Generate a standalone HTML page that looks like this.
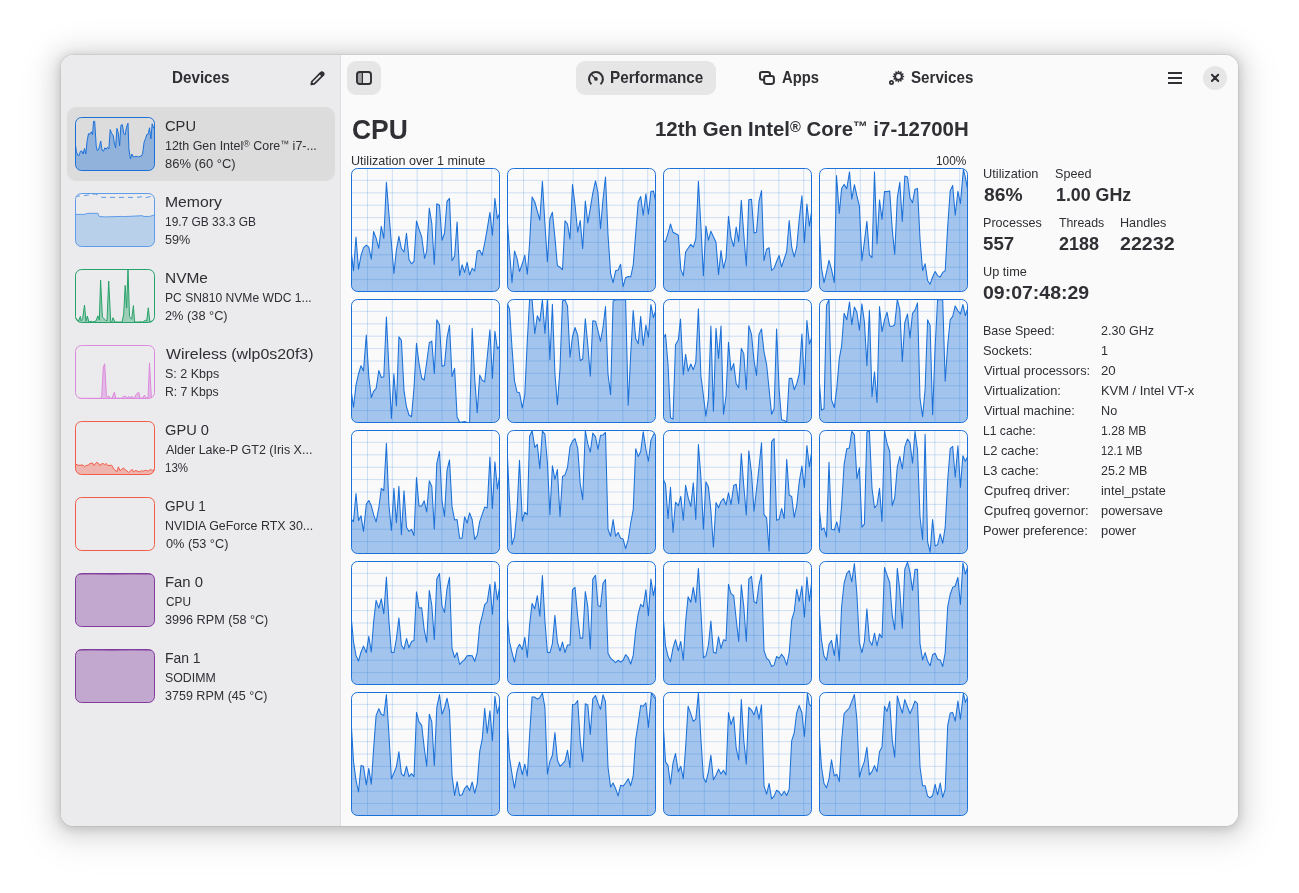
<!DOCTYPE html><html lang="en"><head><meta charset="utf-8"><title>Mission Center</title>
<style>
*{box-sizing:border-box;margin:0;padding:0}
html,body{width:1299px;height:893px;overflow:hidden;background:#fff}
body{font-family:"Liberation Sans",sans-serif;color:#2f2f34;position:relative}
.win{will-change:transform;position:absolute;left:61px;top:55px;width:1177px;height:771px;border-radius:13px;background:#fafafb;overflow:hidden}
.shadow{position:absolute;left:61px;top:55px;width:1177px;height:771px;border-radius:13px;
 box-shadow:0 0 0 1px rgba(0,0,0,.05),0 2px 8px 2px rgba(0,0,0,.13),0 3px 20px 10px rgba(0,0,0,.09),0 6px 36px 18px rgba(0,0,0,.045)}
.side{position:absolute;left:0;top:0;width:279px;height:771px;background:#ebebed}
.sep{position:absolute;left:279px;top:0;width:1px;height:771px;background:#dededf}
.abs{position:absolute;white-space:nowrap}
.t{position:absolute;white-space:nowrap;line-height:1;transform-origin:0 0}
.b{font-weight:700}
.row{position:absolute;left:6px;width:268px;height:74px;border-radius:9px}
.row.sel{background:#dcdcdd}
.thumb{position:absolute;left:8px;width:80px;height:54px}
.rt{position:absolute;left:98px;white-space:nowrap;line-height:1}
.r1{font-size:15px;letter-spacing:.35px}
.r2{font-size:12px;letter-spacing:.2px}
.btn{position:absolute;border-radius:9px;background:#e6e6e7}
.tab{position:absolute;top:6px;height:34px;border-radius:9px}
.tab.on{background:#e6e6e7}
.tab span{position:absolute;top:9px;font-size:15px;font-weight:700;line-height:1;letter-spacing:.1px;white-space:nowrap}
.sup{font-size:.72em;position:relative;top:-.28em}
.big{font-size:17px;font-weight:700;letter-spacing:.3px}
svg{position:absolute;overflow:visible}
</style></head><body>
<div class="shadow"></div><div class="win">
<div class="side"></div><div class="sep"></div>
<div class="t" style="left:110.50px;top:15.01px;font-size:15.9px;transform:scaleX(0.9567);font-weight:700">Devices</div>
<svg style="left:249.4px;top:15.2px" width="16" height="16" viewBox="0 0 16 16"><path d="M1.3 14.5 L1.9 11.5 L10.7 2.7 a1.75 1.75 0 0 1 2.45 0 a1.75 1.75 0 0 1 0 2.45 L4.3 13.9 Z" fill="none" stroke="#2f2f34" stroke-width="1.7" stroke-linejoin="round"/><path d="M9.5 3.9 L10.7 2.7 a1.75 1.75 0 0 1 2.45 2.45 L11.95 6.35 Z" fill="#2f2f34" stroke="#2f2f34" stroke-width="1" stroke-linejoin="round"/><path d="M1.2 14.6 L1.8 11.9 L3.9 14 Z" fill="#2f2f34"/></svg>
<div class="row sel" style="top:52px">
<svg class="thumb" style="top:10px" width="80" height="54" viewBox="0 0 80 54"><defs><clipPath id="tcpu"><rect x="0.5" y="0.5" width="79" height="53" rx="6" ry="6"/></clipPath></defs><g clip-path="url(#tcpu)"><polygon points="0.0,54 0.0,24.6 1.4,34.5 2.7,38.2 4.1,38.5 5.4,34.2 6.8,33.9 8.1,37.0 9.5,31.4 10.8,37.0 12.2,23.4 13.5,16.6 14.9,17.2 16.3,14.8 17.6,17.6 18.5,4.3 19.7,4.3 21.2,28.9 22.2,33.6 23.5,32.9 24.6,28.9 25.7,24.0 27.1,33.3 28.5,34.2 29.8,30.8 31.2,32.3 32.5,30.2 33.9,31.7 35.2,12.6 36.6,16.3 38.2,18.5 39.3,25.9 40.6,30.8 41.9,11.4 43.2,15.4 44.6,28.9 45.9,8.3 47.4,7.7 48.8,16.9 50.1,17.9 51.5,10.2 53.0,6.2 53.9,32.0 55.4,41.9 56.9,37.0 58.3,40.0 59.6,39.7 61.0,39.4 62.3,39.4 63.7,40.0 65.0,39.4 66.4,39.1 67.7,36.3 69.1,25.3 70.5,21.6 71.8,17.6 73.2,17.2 74.5,10.8 75.9,21.9 77.2,6.8 78.6,11.1 80.0,12.3 80.0,54" fill="rgba(28,113,216,.395)"/><polyline points="0.0,24.6 1.4,34.5 2.7,38.2 4.1,38.5 5.4,34.2 6.8,33.9 8.1,37.0 9.5,31.4 10.8,37.0 12.2,23.4 13.5,16.6 14.9,17.2 16.3,14.8 17.6,17.6 18.5,4.3 19.7,4.3 21.2,28.9 22.2,33.6 23.5,32.9 24.6,28.9 25.7,24.0 27.1,33.3 28.5,34.2 29.8,30.8 31.2,32.3 32.5,30.2 33.9,31.7 35.2,12.6 36.6,16.3 38.2,18.5 39.3,25.9 40.6,30.8 41.9,11.4 43.2,15.4 44.6,28.9 45.9,8.3 47.4,7.7 48.8,16.9 50.1,17.9 51.5,10.2 53.0,6.2 53.9,32.0 55.4,41.9 56.9,37.0 58.3,40.0 59.6,39.7 61.0,39.4 62.3,39.4 63.7,40.0 65.0,39.4 66.4,39.1 67.7,36.3 69.1,25.3 70.5,21.6 71.8,17.6 73.2,17.2 74.5,10.8 75.9,21.9 77.2,6.8 78.6,11.1 80.0,12.3" fill="none" stroke="#1c71d8" stroke-width="1.0" stroke-linejoin="round"/></g><rect x="0.5" y="0.5" width="79" height="53" rx="6" ry="6" fill="none" stroke="#1c71d8" stroke-width="1"/></svg>
</div>
<div class="t" style="left:103.93px;top:62.70px;font-size:15.4px;transform:scaleX(0.9545)">CPU</div>
<div class="t" style="left:103.79px;top:85.01px;font-size:12.6px;transform:scaleX(0.9880)">12th Gen Intel<span class="sup">®</span> Core<span class="sup">™</span> i7-...</div>
<div class="t" style="left:104.25px;top:103.01px;font-size:12.6px;transform:scaleX(1.0273)">86% (60 °C)</div>
<div class="row" style="top:128px">
<svg class="thumb" style="top:10px" width="80" height="54" viewBox="0 0 80 54"><defs><clipPath id="tmem"><rect x="0.5" y="0.5" width="79" height="53" rx="6" ry="6"/></clipPath></defs><g clip-path="url(#tmem)"><polygon points="0.0,54 0.0,21.4 9.2,21.4 12.9,20.4 22.8,20.3 24.3,23.5 30.8,23.9 46.2,23.4 49.3,23.6 67.1,22.7 69.0,23.5 74.5,23.4 80.0,22.0 80.0,54" fill="rgba(98,160,234,.36)"/><polyline points="0.0,21.4 9.2,21.4 12.9,20.4 22.8,20.3 24.3,23.5 30.8,23.9 46.2,23.4 49.3,23.6 67.1,22.7 69.0,23.5 74.5,23.4 80.0,22.0" fill="none" stroke="#5e9be8" stroke-width="1.0" stroke-linejoin="round"/><polyline points="0.0,3.4 9.9,2.5 20.3,0.9 23.4,2.5 27.1,4.4 61.6,4.4 67.1,3.7 70.2,4.8 80.0,2.5" fill="none" stroke="#5e9be8" stroke-width="1" stroke-dasharray="5 4"/></g><rect x="0.5" y="0.5" width="79" height="53" rx="6" ry="6" fill="none" stroke="#5e9be8" stroke-width="1"/></svg>
</div>
<div class="t" style="left:104.07px;top:138.70px;font-size:15.4px;transform:scaleX(1.0227)">Memory</div>
<div class="t" style="left:103.79px;top:161.01px;font-size:12.6px;transform:scaleX(0.9478)">19.7 GB 33.3 GB</div>
<div class="t" style="left:104.01px;top:179.01px;font-size:12.6px;transform:scaleX(1.0018)">59%</div>
<div class="row" style="top:204px">
<svg class="thumb" style="top:10px" width="80" height="54" viewBox="0 0 80 54"><defs><clipPath id="tnvme"><rect x="0.5" y="0.5" width="79" height="53" rx="6" ry="6"/></clipPath></defs><g clip-path="url(#tnvme)"><polygon points="0.0,54 0.0,48.0 1.4,49.9 3.4,52.0 5.4,47.4 6.2,52.0 7.7,49.3 9.5,36.0 11.0,52.3 12.3,47.1 13.9,53.0 16.3,52.3 17.9,53.0 20.9,52.0 22.9,46.8 24.3,51.1 25.6,11.1 27.4,48.0 30.8,51.4 32.0,51.7 33.7,12.0 35.7,52.7 36.8,53.0 37.9,48.7 40.0,53.0 47.1,53.0 48.7,45.0 50.2,16.5 51.6,39.1 53.0,0.6 54.5,47.4 56.7,50.2 58.4,36.6 59.6,53.0 64.0,53.0 65.3,52.7 67.7,53.1 70.5,51.1 71.7,52.3 73.3,38.8 74.8,52.8 77.0,52.0 80.0,49.3 80.0,54" fill="rgba(38,162,105,.40)"/><polyline points="0.0,48.0 1.4,49.9 3.4,52.0 5.4,47.4 6.2,52.0 7.7,49.3 9.5,36.0 11.0,52.3 12.3,47.1 13.9,53.0 16.3,52.3 17.9,53.0 20.9,52.0 22.9,46.8 24.3,51.1 25.6,11.1 27.4,48.0 30.8,51.4 32.0,51.7 33.7,12.0 35.7,52.7 36.8,53.0 37.9,48.7 40.0,53.0 47.1,53.0 48.7,45.0 50.2,16.5 51.6,39.1 53.0,0.6 54.5,47.4 56.7,50.2 58.4,36.6 59.6,53.0 64.0,53.0 65.3,52.7 67.7,53.1 70.5,51.1 71.7,52.3 73.3,38.8 74.8,52.8 77.0,52.0 80.0,49.3" fill="none" stroke="#26a269" stroke-width="1.0" stroke-linejoin="round"/></g><rect x="0.5" y="0.5" width="79" height="53" rx="6" ry="6" fill="none" stroke="#26a269" stroke-width="1"/></svg>
</div>
<div class="t" style="left:104.33px;top:214.70px;font-size:15.4px;transform:scaleX(1.0033)">NVMe</div>
<div class="t" style="left:104.40px;top:237.01px;font-size:12.6px;transform:scaleX(0.9612)">PC SN810 NVMe WDC 1...</div>
<div class="t" style="left:104.49px;top:255.01px;font-size:12.6px;transform:scaleX(1.0146)">2% (38 °C)</div>
<div class="row" style="top:280px">
<svg class="thumb" style="top:10px" width="80" height="54" viewBox="0 0 80 54"><defs><clipPath id="tnet"><rect x="0.5" y="0.5" width="79" height="53" rx="6" ry="6"/></clipPath></defs><g clip-path="url(#tnet)"><polygon points="0.0,54 0.0,53.3 25.9,53.3 26.8,50.5 28.3,22.2 29.7,18.8 31.4,50.5 32.3,52.0 33.9,51.1 35.1,53.3 37.0,53.1 39.4,47.1 40.8,53.1 46.8,53.1 48.7,51.2 50.5,51.4 52.3,52.7 54.2,51.4 55.4,53.1 56.7,51.2 58.2,53.1 59.4,53.0 61.0,49.6 63.7,47.1 65.0,53.1 67.7,53.1 69.3,50.2 71.4,52.7 73.0,53.1 74.5,17.9 76.4,53.1 80.0,51.7 80.0,54" fill="rgba(220,138,221,.50)"/><polyline points="0.0,53.3 25.9,53.3 26.8,50.5 28.3,22.2 29.7,18.8 31.4,50.5 32.3,52.0 33.9,51.1 35.1,53.3 37.0,53.1 39.4,47.1 40.8,53.1 46.8,53.1 48.7,51.2 50.5,51.4 52.3,52.7 54.2,51.4 55.4,53.1 56.7,51.2 58.2,53.1 59.4,53.0 61.0,49.6 63.7,47.1 65.0,53.1 67.7,53.1 69.3,50.2 71.4,52.7 73.0,53.1 74.5,17.9 76.4,53.1 80.0,51.7" fill="none" stroke="#dc8add" stroke-width="1.0" stroke-linejoin="round"/></g><rect x="0.5" y="0.5" width="79" height="53" rx="6" ry="6" fill="none" stroke="#dc8add" stroke-width="1"/></svg>
</div>
<div class="t" style="left:105.08px;top:290.70px;font-size:15.4px;transform:scaleX(1.0322)">Wireless (wlp0s20f3)</div>
<div class="t" style="left:103.85px;top:313.01px;font-size:12.6px;transform:scaleX(0.9924)">S: 2 Kbps</div>
<div class="t" style="left:104.40px;top:331.01px;font-size:12.6px;transform:scaleX(0.9690)">R: 7 Kbps</div>
<div class="row" style="top:356px">
<svg class="thumb" style="top:10px" width="80" height="54" viewBox="0 0 80 54"><defs><clipPath id="tgpu0"><rect x="0.5" y="0.5" width="79" height="53" rx="6" ry="6"/></clipPath></defs><g clip-path="url(#tgpu0)"><polygon points="0.0,54 0.0,42.8 3.1,44.3 8.0,44.0 9.5,45.7 11.1,44.5 13.5,44.0 14.8,42.5 17.6,42.0 19.0,44.6 21.6,41.3 23.4,42.2 24.6,44.8 25.9,43.1 28.3,42.5 29.6,43.7 31.4,42.5 32.6,44.5 36.6,44.2 39.4,48.7 41.9,50.6 43.4,45.9 45.0,49.6 48.7,46.9 50.2,49.0 51.7,49.6 53.3,51.4 55.4,50.2 57.0,48.3 58.5,50.8 61.0,49.3 62.2,50.2 64.7,50.8 66.5,49.4 67.7,50.4 69.6,49.4 71.7,49.4 73.3,50.2 75.6,48.3 77.3,49.6 80.0,48.0 80.0,54" fill="rgba(246,97,81,.40)"/><polyline points="0.0,42.8 3.1,44.3 8.0,44.0 9.5,45.7 11.1,44.5 13.5,44.0 14.8,42.5 17.6,42.0 19.0,44.6 21.6,41.3 23.4,42.2 24.6,44.8 25.9,43.1 28.3,42.5 29.6,43.7 31.4,42.5 32.6,44.5 36.6,44.2 39.4,48.7 41.9,50.6 43.4,45.9 45.0,49.6 48.7,46.9 50.2,49.0 51.7,49.6 53.3,51.4 55.4,50.2 57.0,48.3 58.5,50.8 61.0,49.3 62.2,50.2 64.7,50.8 66.5,49.4 67.7,50.4 69.6,49.4 71.7,49.4 73.3,50.2 75.6,48.3 77.3,49.6 80.0,48.0" fill="none" stroke="#f15d49" stroke-width="1.0" stroke-linejoin="round"/></g><rect x="0.5" y="0.5" width="79" height="53" rx="6" ry="6" fill="none" stroke="#f15d49" stroke-width="1"/></svg>
</div>
<div class="t" style="left:103.93px;top:366.70px;font-size:15.4px;transform:scaleX(0.9515)">GPU 0</div>
<div class="t" style="left:105.18px;top:389.01px;font-size:12.6px;transform:scaleX(0.9927)">Alder Lake-P GT2 (Iris X...</div>
<div class="t" style="left:103.79px;top:407.01px;font-size:12.6px;transform:scaleX(0.9155)">13%</div>
<div class="row" style="top:432px">
<svg class="thumb" style="top:10px" width="80" height="54" viewBox="0 0 80 54"><defs><clipPath id="tgpu1"><rect x="0.5" y="0.5" width="79" height="53" rx="6" ry="6"/></clipPath></defs><g clip-path="url(#tgpu1)"></g><rect x="0.5" y="0.5" width="79" height="53" rx="6" ry="6" fill="none" stroke="#f15d49" stroke-width="1"/></svg>
</div>
<div class="t" style="left:103.93px;top:442.70px;font-size:15.4px;transform:scaleX(0.8840)">GPU 1</div>
<div class="t" style="left:104.40px;top:465.01px;font-size:12.6px;transform:scaleX(0.9860)">NVIDIA GeForce RTX 30...</div>
<div class="t" style="left:105.06px;top:483.01px;font-size:12.6px;transform:scaleX(1.0108)">0% (53 °C)</div>
<div class="row" style="top:508px">
<svg class="thumb" style="top:10px" width="80" height="54" viewBox="0 0 80 54"><defs><clipPath id="tfan0"><rect x="0.5" y="0.5" width="79" height="53" rx="6" ry="6"/></clipPath></defs><g clip-path="url(#tfan0)"><polygon points="0.0,54 0.0,1.1 18.5,0.9 37.0,1.2 55.4,0.9 80.0,1.1 80.0,54" fill="rgba(129,61,156,.39)"/><polyline points="0.0,1.1 18.5,0.9 37.0,1.2 55.4,0.9 80.0,1.1" fill="none" stroke="#813d9c" stroke-width="1.0" stroke-linejoin="round"/></g><rect x="0.5" y="0.5" width="79" height="53" rx="6" ry="6" fill="none" stroke="#813d9c" stroke-width="1"/></svg>
</div>
<div class="t" style="left:104.02px;top:518.70px;font-size:15.4px;transform:scaleX(0.9661)">Fan 0</div>
<div class="t" style="left:104.72px;top:541.01px;font-size:12.6px;transform:scaleX(0.9372)">CPU</div>
<div class="t" style="left:104.06px;top:559.01px;font-size:12.6px;transform:scaleX(1.0028)">3996 RPM (58 °C)</div>
<div class="row" style="top:584px">
<svg class="thumb" style="top:10px" width="80" height="54" viewBox="0 0 80 54"><defs><clipPath id="tfan1"><rect x="0.5" y="0.5" width="79" height="53" rx="6" ry="6"/></clipPath></defs><g clip-path="url(#tfan1)"><polygon points="0.0,54 0.0,1.1 18.5,0.9 37.0,1.2 55.4,0.9 80.0,1.1 80.0,54" fill="rgba(129,61,156,.39)"/><polyline points="0.0,1.1 18.5,0.9 37.0,1.2 55.4,0.9 80.0,1.1" fill="none" stroke="#813d9c" stroke-width="1.0" stroke-linejoin="round"/></g><rect x="0.5" y="0.5" width="79" height="53" rx="6" ry="6" fill="none" stroke="#813d9c" stroke-width="1"/></svg>
</div>
<div class="t" style="left:104.40px;top:594.70px;font-size:15.4px;transform:scaleX(0.9049)">Fan 1</div>
<div class="t" style="left:103.85px;top:617.01px;font-size:12.6px;transform:scaleX(0.9794)">SODIMM</div>
<div class="t" style="left:104.06px;top:635.01px;font-size:12.6px;transform:scaleX(0.9944)">3759 RPM (45 °C)</div>
<div class="btn" style="left:286px;top:6px;width:34px;height:34px"></div>
<svg style="left:295px;top:15px" width="16" height="16" viewBox="0 0 16 16"><rect x="1.9" y="2.9" width="4.2" height="10.2" fill="#2f2f34" fill-opacity=".36"/><rect x="1" y="2" width="14" height="12" rx="2.6" fill="none" stroke="#2f2f34" stroke-width="1.9"/><path d="M6.4 2V14" stroke="#2f2f34" stroke-width="1.2"/></svg>
<div class="tab on" style="left:515px;width:140px"><svg style="left:12px;top:10px" width="16" height="16" viewBox="0 0 16 16"><path d="M3.39 13.20A6.95 6.95 0 1 1 12.51 13.20" fill="none" stroke="#2f2f34" stroke-width="2.1"/><circle cx="7.95" cy="7.9" r="1.85" fill="#2f2f34"/><path d="M7.95 7.9L4 4.1" stroke="#2f2f34" stroke-width="1.4" stroke-linecap="round"/></svg></div>
<div class="t" style="left:549.09px;top:15.01px;font-size:15.9px;transform:scaleX(0.9590);font-weight:700">Performance</div>
<div class="tab" style="left:687px;width:82px"><svg style="left:10px;top:9px" width="18" height="16" viewBox="0 0 18 16"><rect x="1.96" y="1.96" width="10" height="7.85" rx="2.3" fill="none" stroke="#2f2f34" stroke-width="2"/><rect x="6.1" y="6.1" width="9.8" height="7.8" rx="2.3" fill="#fafafb" stroke="#2f2f34" stroke-width="2"/></svg></div>
<div class="t" style="left:720.68px;top:15.01px;font-size:15.9px;transform:scaleX(0.9304);font-weight:700">Apps</div>
<div class="tab" style="left:817px;width:106px"><svg style="left:10px;top:9px" width="18" height="16" viewBox="0 0 18 16"><g transform="translate(10.46,6.52)"><circle r="3.35" fill="none" stroke="#2f2f34" stroke-width="1.9"/><path d="M-1.05 -3.9 L-0.55 -5.7 L0.55 -5.7 L1.05 -3.9Z" fill="#2f2f34" transform="rotate(0)"/><path d="M-1.05 -3.9 L-0.55 -5.7 L0.55 -5.7 L1.05 -3.9Z" fill="#2f2f34" transform="rotate(30)"/><path d="M-1.05 -3.9 L-0.55 -5.7 L0.55 -5.7 L1.05 -3.9Z" fill="#2f2f34" transform="rotate(60)"/><path d="M-1.05 -3.9 L-0.55 -5.7 L0.55 -5.7 L1.05 -3.9Z" fill="#2f2f34" transform="rotate(90)"/><path d="M-1.05 -3.9 L-0.55 -5.7 L0.55 -5.7 L1.05 -3.9Z" fill="#2f2f34" transform="rotate(120)"/><path d="M-1.05 -3.9 L-0.55 -5.7 L0.55 -5.7 L1.05 -3.9Z" fill="#2f2f34" transform="rotate(150)"/><path d="M-1.05 -3.9 L-0.55 -5.7 L0.55 -5.7 L1.05 -3.9Z" fill="#2f2f34" transform="rotate(180)"/><path d="M-1.05 -3.9 L-0.55 -5.7 L0.55 -5.7 L1.05 -3.9Z" fill="#2f2f34" transform="rotate(210)"/><path d="M-1.05 -3.9 L-0.55 -5.7 L0.55 -5.7 L1.05 -3.9Z" fill="#2f2f34" transform="rotate(240)"/><path d="M-1.05 -3.9 L-0.55 -5.7 L0.55 -5.7 L1.05 -3.9Z" fill="#2f2f34" transform="rotate(270)"/><path d="M-1.05 -3.9 L-0.55 -5.7 L0.55 -5.7 L1.05 -3.9Z" fill="#2f2f34" transform="rotate(300)"/><path d="M-1.05 -3.9 L-0.55 -5.7 L0.55 -5.7 L1.05 -3.9Z" fill="#2f2f34" transform="rotate(330)"/></g><circle cx="3.47" cy="12.43" r="1.65" fill="none" stroke="#2f2f34" stroke-width="1.7"/></svg></div>
<div class="t" style="left:850.35px;top:15.01px;font-size:15.9px;transform:scaleX(0.9530);font-weight:700">Services</div>
<svg style="left:1106px;top:15px" width="16" height="16" viewBox="0 0 16 16"><path d="M1 3H15M1 8H15M1 13H15" stroke="#2f2f34" stroke-width="2"/></svg>
<div class="btn" style="left:1142px;top:11px;width:24px;height:24px;border-radius:12px"></div>
<svg style="left:1146px;top:15px" width="16" height="16" viewBox="0 0 16 16"><path d="M4.9 4.75L11.2 11.05M11.2 4.75L4.9 11.05" stroke="#2f2f34" stroke-width="2" stroke-linecap="round"/></svg>
<div class="t" style="left:290.99px;top:60.81px;font-size:28px;transform:scaleX(0.9444);font-weight:700">CPU</div>
<div class="t" style="left:593.60px;top:62.91px;font-size:21px;transform:scaleX(0.9721);font-weight:700">12th Gen Intel<span class="sup">®</span> Core<span class="sup">™</span> i7-12700H</div>
<div class="t" style="left:290.40px;top:99.72px;font-size:12.6px;transform:scaleX(0.9987)">Utilization over 1 minute</div>
<div class="t" style="left:875.40px;top:99.72px;font-size:12.6px;transform:scaleX(0.9437)">100%</div>
<svg style="left:290px;top:113px" width="149" height="124" viewBox="0 0 149 124"><defs><clipPath id="c0"><rect x="0.5" y="0.5" width="148" height="123" rx="6" ry="6"/></clipPath></defs><g clip-path="url(#c0)"><path d="M16.50 0V124M41.33 0V124M66.17 0V124M91.00 0V124M115.83 0V124M140.67 0V124M0 12.40H149M0 24.80H149M0 37.20H149M0 49.60H149M0 62.00H149M0 74.40H149M0 86.80H149M0 99.20H149M0 111.60H149" stroke="#1c71d8" stroke-opacity=".2" stroke-width="1" fill="none"/><polygon points="0.0,124 0.0,81.9 2.5,102.8 5.0,69.0 7.5,101.1 10.0,87.5 12.5,79.8 15.3,77.2 17.8,79.2 20.3,91.2 22.6,63.5 25.1,70.1 27.8,80.3 30.3,58.3 32.8,70.5 35.4,14.2 37.9,45.8 40.4,75.0 42.9,105.5 45.4,81.9 47.9,68.3 50.4,80.5 53.0,84.0 55.5,65.3 58.0,91.6 60.5,95.8 63.0,93.3 65.5,53.0 68.0,61.1 70.7,69.0 73.6,90.3 75.7,83.3 78.3,40.0 80.8,55.5 83.3,96.5 85.8,35.7 88.5,37.2 91.0,72.2 93.5,65.3 96.0,33.3 98.5,30.3 101.0,92.8 103.6,88.2 106.1,53.9 108.6,107.6 111.1,96.8 113.6,104.4 116.1,94.4 118.6,106.9 121.2,100.3 123.7,103.0 126.2,83.3 128.7,82.2 131.2,87.2 133.7,75.0 136.2,61.1 138.9,44.4 141.4,67.3 143.9,30.3 146.4,50.7 149.0,44.4 149.0,124" fill="rgba(28,113,216,.395)"/><polyline points="0.0,81.9 2.5,102.8 5.0,69.0 7.5,101.1 10.0,87.5 12.5,79.8 15.3,77.2 17.8,79.2 20.3,91.2 22.6,63.5 25.1,70.1 27.8,80.3 30.3,58.3 32.8,70.5 35.4,14.2 37.9,45.8 40.4,75.0 42.9,105.5 45.4,81.9 47.9,68.3 50.4,80.5 53.0,84.0 55.5,65.3 58.0,91.6 60.5,95.8 63.0,93.3 65.5,53.0 68.0,61.1 70.7,69.0 73.6,90.3 75.7,83.3 78.3,40.0 80.8,55.5 83.3,96.5 85.8,35.7 88.5,37.2 91.0,72.2 93.5,65.3 96.0,33.3 98.5,30.3 101.0,92.8 103.6,88.2 106.1,53.9 108.6,107.6 111.1,96.8 113.6,104.4 116.1,94.4 118.6,106.9 121.2,100.3 123.7,103.0 126.2,83.3 128.7,82.2 131.2,87.2 133.7,75.0 136.2,61.1 138.9,44.4 141.4,67.3 143.9,30.3 146.4,50.7 149.0,44.4" fill="none" stroke="#1c71d8" stroke-width="1.05" stroke-linejoin="round"/></g><rect x="0.5" y="0.5" width="148" height="123" rx="6" ry="6" fill="none" stroke="#1c71d8" stroke-width="1"/></svg>
<svg style="left:446px;top:113px" width="149" height="124" viewBox="0 0 149 124"><defs><clipPath id="c1"><rect x="0.5" y="0.5" width="148" height="123" rx="6" ry="6"/></clipPath></defs><g clip-path="url(#c1)"><path d="M16.50 0V124M41.33 0V124M66.17 0V124M91.00 0V124M115.83 0V124M140.67 0V124M0 12.40H149M0 24.80H149M0 37.20H149M0 49.60H149M0 62.00H149M0 74.40H149M0 86.80H149M0 99.20H149M0 111.60H149" stroke="#1c71d8" stroke-opacity=".2" stroke-width="1" fill="none"/><polygon points="0.0,124 0.0,47.2 2.5,83.3 5.0,114.6 7.5,83.0 10.0,90.3 12.5,103.5 15.3,95.8 17.8,87.2 20.3,106.2 22.6,75.0 25.1,28.9 27.8,34.0 30.3,43.0 32.8,52.1 35.4,13.2 37.9,55.5 40.4,93.7 42.9,50.7 45.4,44.2 47.9,69.4 50.4,97.6 53.0,99.3 55.5,101.6 58.0,52.8 60.5,56.0 63.0,71.1 65.5,16.4 68.0,36.8 70.7,64.2 73.2,52.5 75.7,80.8 78.3,33.0 80.8,54.9 83.3,40.3 85.8,25.0 88.5,12.9 91.0,25.0 93.5,60.7 96.0,31.2 98.5,9.0 101.0,66.7 103.6,105.5 106.1,114.6 108.6,102.8 111.1,102.1 113.6,96.2 116.1,118.7 118.6,109.7 121.2,108.6 123.7,109.0 126.2,97.2 128.7,65.3 131.2,34.0 133.7,28.5 136.2,47.2 138.9,25.7 141.4,46.2 143.9,23.6 146.4,22.9 149.0,34.7 149.0,124" fill="rgba(28,113,216,.395)"/><polyline points="0.0,47.2 2.5,83.3 5.0,114.6 7.5,83.0 10.0,90.3 12.5,103.5 15.3,95.8 17.8,87.2 20.3,106.2 22.6,75.0 25.1,28.9 27.8,34.0 30.3,43.0 32.8,52.1 35.4,13.2 37.9,55.5 40.4,93.7 42.9,50.7 45.4,44.2 47.9,69.4 50.4,97.6 53.0,99.3 55.5,101.6 58.0,52.8 60.5,56.0 63.0,71.1 65.5,16.4 68.0,36.8 70.7,64.2 73.2,52.5 75.7,80.8 78.3,33.0 80.8,54.9 83.3,40.3 85.8,25.0 88.5,12.9 91.0,25.0 93.5,60.7 96.0,31.2 98.5,9.0 101.0,66.7 103.6,105.5 106.1,114.6 108.6,102.8 111.1,102.1 113.6,96.2 116.1,118.7 118.6,109.7 121.2,108.6 123.7,109.0 126.2,97.2 128.7,65.3 131.2,34.0 133.7,28.5 136.2,47.2 138.9,25.7 141.4,46.2 143.9,23.6 146.4,22.9 149.0,34.7" fill="none" stroke="#1c71d8" stroke-width="1.05" stroke-linejoin="round"/></g><rect x="0.5" y="0.5" width="148" height="123" rx="6" ry="6" fill="none" stroke="#1c71d8" stroke-width="1"/></svg>
<svg style="left:602px;top:113px" width="149" height="124" viewBox="0 0 149 124"><defs><clipPath id="c2"><rect x="0.5" y="0.5" width="148" height="123" rx="6" ry="6"/></clipPath></defs><g clip-path="url(#c2)"><path d="M16.50 0V124M41.33 0V124M66.17 0V124M91.00 0V124M115.83 0V124M140.67 0V124M0 12.40H149M0 24.80H149M0 37.20H149M0 49.60H149M0 62.00H149M0 74.40H149M0 86.80H149M0 99.20H149M0 111.60H149" stroke="#1c71d8" stroke-opacity=".2" stroke-width="1" fill="none"/><polygon points="0.0,124 0.0,72.9 2.5,73.6 5.0,65.3 7.5,56.0 10.0,64.2 12.5,65.5 15.3,67.3 17.8,101.4 20.3,107.9 22.6,84.0 25.1,80.3 27.8,76.4 30.3,79.2 32.8,70.8 35.4,13.2 37.9,58.3 40.4,107.6 42.9,58.0 45.4,72.2 47.9,63.2 50.4,68.7 53.0,74.3 55.5,106.6 58.0,82.6 60.5,100.3 63.0,90.3 65.5,48.3 68.0,69.4 70.7,78.5 73.2,59.0 75.7,73.6 78.3,32.2 80.8,66.7 83.3,97.9 85.8,31.7 88.5,31.2 91.0,65.0 93.5,64.2 96.0,33.3 98.5,22.5 101.0,92.6 103.6,81.2 106.1,79.8 108.6,102.5 111.1,100.0 113.6,93.5 116.1,87.5 118.6,98.9 121.2,91.0 123.7,83.3 126.2,52.5 128.7,79.2 131.2,88.9 133.7,79.2 136.2,51.4 138.9,27.8 141.4,74.6 143.9,36.1 146.4,58.3 149.0,40.3 149.0,124" fill="rgba(28,113,216,.395)"/><polyline points="0.0,72.9 2.5,73.6 5.0,65.3 7.5,56.0 10.0,64.2 12.5,65.5 15.3,67.3 17.8,101.4 20.3,107.9 22.6,84.0 25.1,80.3 27.8,76.4 30.3,79.2 32.8,70.8 35.4,13.2 37.9,58.3 40.4,107.6 42.9,58.0 45.4,72.2 47.9,63.2 50.4,68.7 53.0,74.3 55.5,106.6 58.0,82.6 60.5,100.3 63.0,90.3 65.5,48.3 68.0,69.4 70.7,78.5 73.2,59.0 75.7,73.6 78.3,32.2 80.8,66.7 83.3,97.9 85.8,31.7 88.5,31.2 91.0,65.0 93.5,64.2 96.0,33.3 98.5,22.5 101.0,92.6 103.6,81.2 106.1,79.8 108.6,102.5 111.1,100.0 113.6,93.5 116.1,87.5 118.6,98.9 121.2,91.0 123.7,83.3 126.2,52.5 128.7,79.2 131.2,88.9 133.7,79.2 136.2,51.4 138.9,27.8 141.4,74.6 143.9,36.1 146.4,58.3 149.0,40.3" fill="none" stroke="#1c71d8" stroke-width="1.05" stroke-linejoin="round"/></g><rect x="0.5" y="0.5" width="148" height="123" rx="6" ry="6" fill="none" stroke="#1c71d8" stroke-width="1"/></svg>
<svg style="left:758px;top:113px" width="149" height="124" viewBox="0 0 149 124"><defs><clipPath id="c3"><rect x="0.5" y="0.5" width="148" height="123" rx="6" ry="6"/></clipPath></defs><g clip-path="url(#c3)"><path d="M16.50 0V124M41.33 0V124M66.17 0V124M91.00 0V124M115.83 0V124M140.67 0V124M0 12.40H149M0 24.80H149M0 37.20H149M0 49.60H149M0 62.00H149M0 74.40H149M0 86.80H149M0 99.20H149M0 111.60H149" stroke="#1c71d8" stroke-opacity=".2" stroke-width="1" fill="none"/><polygon points="0.0,124 0.0,55.5 2.5,100.0 5.0,114.6 7.5,104.1 10.0,92.3 12.5,101.4 15.3,114.6 17.5,7.6 20.3,45.5 22.6,20.6 25.1,16.4 27.8,20.6 30.5,3.9 32.8,31.2 35.4,16.7 37.9,27.8 40.4,38.2 42.9,92.8 45.4,73.6 47.9,53.2 50.4,86.8 53.0,89.6 55.5,3.9 58.0,75.7 60.5,31.9 63.0,51.4 65.5,23.6 68.0,23.6 70.7,22.9 73.2,61.1 75.7,86.4 78.3,29.9 80.8,14.3 83.3,53.5 85.8,8.1 88.5,9.0 91.0,29.9 93.5,34.7 96.0,21.2 98.5,20.6 101.0,70.8 103.6,102.5 106.1,95.8 108.6,112.5 111.1,116.2 113.6,109.0 116.1,103.5 118.6,107.6 121.2,109.0 123.7,104.4 126.2,102.8 128.7,58.3 131.2,22.9 133.7,17.4 136.2,47.2 138.9,23.3 141.4,35.4 144.4,1.4 146.4,9.7 149.0,23.6 149.0,124" fill="rgba(28,113,216,.395)"/><polyline points="0.0,55.5 2.5,100.0 5.0,114.6 7.5,104.1 10.0,92.3 12.5,101.4 15.3,114.6 17.5,7.6 20.3,45.5 22.6,20.6 25.1,16.4 27.8,20.6 30.5,3.9 32.8,31.2 35.4,16.7 37.9,27.8 40.4,38.2 42.9,92.8 45.4,73.6 47.9,53.2 50.4,86.8 53.0,89.6 55.5,3.9 58.0,75.7 60.5,31.9 63.0,51.4 65.5,23.6 68.0,23.6 70.7,22.9 73.2,61.1 75.7,86.4 78.3,29.9 80.8,14.3 83.3,53.5 85.8,8.1 88.5,9.0 91.0,29.9 93.5,34.7 96.0,21.2 98.5,20.6 101.0,70.8 103.6,102.5 106.1,95.8 108.6,112.5 111.1,116.2 113.6,109.0 116.1,103.5 118.6,107.6 121.2,109.0 123.7,104.4 126.2,102.8 128.7,58.3 131.2,22.9 133.7,17.4 136.2,47.2 138.9,23.3 141.4,35.4 144.4,1.4 146.4,9.7 149.0,23.6" fill="none" stroke="#1c71d8" stroke-width="1.05" stroke-linejoin="round"/></g><rect x="0.5" y="0.5" width="148" height="123" rx="6" ry="6" fill="none" stroke="#1c71d8" stroke-width="1"/></svg>
<svg style="left:290px;top:244px" width="149" height="124" viewBox="0 0 149 124"><defs><clipPath id="c4"><rect x="0.5" y="0.5" width="148" height="123" rx="6" ry="6"/></clipPath></defs><g clip-path="url(#c4)"><path d="M16.50 0V124M41.33 0V124M66.17 0V124M91.00 0V124M115.83 0V124M140.67 0V124M0 12.40H149M0 24.80H149M0 37.20H149M0 49.60H149M0 62.00H149M0 74.40H149M0 86.80H149M0 99.20H149M0 111.60H149" stroke="#1c71d8" stroke-opacity=".2" stroke-width="1" fill="none"/><polygon points="0.0,124 0.0,90.3 2.5,108.3 5.0,86.1 7.5,75.0 10.0,66.7 12.5,71.9 15.3,36.1 17.8,77.8 20.3,98.6 22.6,92.3 25.1,89.6 27.8,71.5 30.3,78.5 32.8,77.8 35.4,18.1 37.9,69.4 40.4,119.4 42.9,74.7 45.4,106.9 47.9,37.8 50.4,41.4 53.0,91.6 55.5,108.0 58.0,116.0 60.5,117.8 63.0,88.9 65.5,44.2 68.0,64.6 70.7,79.2 73.2,81.0 75.7,63.2 78.3,43.7 80.8,42.1 83.3,74.6 85.8,20.8 88.5,25.7 91.0,67.3 93.5,66.4 96.0,38.9 98.5,26.4 101.0,77.5 103.6,69.4 106.1,118.0 108.6,123.3 111.1,122.9 113.6,122.5 116.1,123.6 118.6,123.3 121.2,29.2 123.7,79.2 126.2,113.9 128.7,76.1 131.2,81.2 133.7,82.9 136.2,58.3 138.9,30.8 141.4,79.4 143.9,32.2 146.4,50.0 149.0,46.5 149.0,124" fill="rgba(28,113,216,.395)"/><polyline points="0.0,90.3 2.5,108.3 5.0,86.1 7.5,75.0 10.0,66.7 12.5,71.9 15.3,36.1 17.8,77.8 20.3,98.6 22.6,92.3 25.1,89.6 27.8,71.5 30.3,78.5 32.8,77.8 35.4,18.1 37.9,69.4 40.4,119.4 42.9,74.7 45.4,106.9 47.9,37.8 50.4,41.4 53.0,91.6 55.5,108.0 58.0,116.0 60.5,117.8 63.0,88.9 65.5,44.2 68.0,64.6 70.7,79.2 73.2,81.0 75.7,63.2 78.3,43.7 80.8,42.1 83.3,74.6 85.8,20.8 88.5,25.7 91.0,67.3 93.5,66.4 96.0,38.9 98.5,26.4 101.0,77.5 103.6,69.4 106.1,118.0 108.6,123.3 111.1,122.9 113.6,122.5 116.1,123.6 118.6,123.3 121.2,29.2 123.7,79.2 126.2,113.9 128.7,76.1 131.2,81.2 133.7,82.9 136.2,58.3 138.9,30.8 141.4,79.4 143.9,32.2 146.4,50.0 149.0,46.5" fill="none" stroke="#1c71d8" stroke-width="1.05" stroke-linejoin="round"/></g><rect x="0.5" y="0.5" width="148" height="123" rx="6" ry="6" fill="none" stroke="#1c71d8" stroke-width="1"/></svg>
<svg style="left:446px;top:244px" width="149" height="124" viewBox="0 0 149 124"><defs><clipPath id="c5"><rect x="0.5" y="0.5" width="148" height="123" rx="6" ry="6"/></clipPath></defs><g clip-path="url(#c5)"><path d="M16.50 0V124M41.33 0V124M66.17 0V124M91.00 0V124M115.83 0V124M140.67 0V124M0 12.40H149M0 24.80H149M0 37.20H149M0 49.60H149M0 62.00H149M0 74.40H149M0 86.80H149M0 99.20H149M0 111.60H149" stroke="#1c71d8" stroke-opacity=".2" stroke-width="1" fill="none"/><polygon points="0.0,124 0.0,4.2 2.5,9.7 5.0,48.6 7.5,81.9 10.0,93.0 12.5,93.7 15.3,109.0 17.8,95.8 20.3,41.7 22.6,0.7 25.1,0.7 27.8,34.7 30.3,16.7 32.8,22.2 35.4,0.7 37.9,34.4 40.4,0.7 42.9,60.8 45.4,5.3 47.9,74.3 50.4,105.8 53.0,69.4 55.5,2.1 58.0,1.1 60.5,6.9 63.0,58.3 65.5,37.5 68.0,28.5 70.7,36.1 73.2,61.8 75.7,60.0 78.3,19.7 80.8,45.8 83.3,77.3 85.8,21.8 88.5,22.2 91.0,31.9 93.5,42.4 96.0,28.5 98.5,7.6 101.0,75.0 103.6,95.8 106.1,2.1 108.6,0.7 111.1,0.7 113.6,0.7 116.1,0.7 118.6,0.7 121.2,106.2 123.7,55.5 126.2,11.5 128.7,39.6 131.2,44.7 133.7,17.4 136.2,46.5 138.9,26.1 141.4,38.2 143.9,5.6 146.4,18.7 149.0,10.4 149.0,124" fill="rgba(28,113,216,.395)"/><polyline points="0.0,4.2 2.5,9.7 5.0,48.6 7.5,81.9 10.0,93.0 12.5,93.7 15.3,109.0 17.8,95.8 20.3,41.7 22.6,0.7 25.1,0.7 27.8,34.7 30.3,16.7 32.8,22.2 35.4,0.7 37.9,34.4 40.4,0.7 42.9,60.8 45.4,5.3 47.9,74.3 50.4,105.8 53.0,69.4 55.5,2.1 58.0,1.1 60.5,6.9 63.0,58.3 65.5,37.5 68.0,28.5 70.7,36.1 73.2,61.8 75.7,60.0 78.3,19.7 80.8,45.8 83.3,77.3 85.8,21.8 88.5,22.2 91.0,31.9 93.5,42.4 96.0,28.5 98.5,7.6 101.0,75.0 103.6,95.8 106.1,2.1 108.6,0.7 111.1,0.7 113.6,0.7 116.1,0.7 118.6,0.7 121.2,106.2 123.7,55.5 126.2,11.5 128.7,39.6 131.2,44.7 133.7,17.4 136.2,46.5 138.9,26.1 141.4,38.2 143.9,5.6 146.4,18.7 149.0,10.4" fill="none" stroke="#1c71d8" stroke-width="1.05" stroke-linejoin="round"/></g><rect x="0.5" y="0.5" width="148" height="123" rx="6" ry="6" fill="none" stroke="#1c71d8" stroke-width="1"/></svg>
<svg style="left:602px;top:244px" width="149" height="124" viewBox="0 0 149 124"><defs><clipPath id="c6"><rect x="0.5" y="0.5" width="148" height="123" rx="6" ry="6"/></clipPath></defs><g clip-path="url(#c6)"><path d="M16.50 0V124M41.33 0V124M66.17 0V124M91.00 0V124M115.83 0V124M140.67 0V124M0 12.40H149M0 24.80H149M0 37.20H149M0 49.60H149M0 62.00H149M0 74.40H149M0 86.80H149M0 99.20H149M0 111.60H149" stroke="#1c71d8" stroke-opacity=".2" stroke-width="1" fill="none"/><polygon points="0.0,124 0.0,39.6 2.5,35.4 5.0,65.3 7.5,118.7 10.0,120.1 12.5,45.8 15.3,41.0 17.5,20.1 20.3,75.7 22.6,55.3 25.1,72.2 27.8,65.0 30.3,70.8 32.8,63.2 35.4,9.7 37.9,77.1 40.4,96.5 42.9,117.3 45.4,99.3 47.9,27.1 50.4,112.2 53.0,29.2 55.5,59.4 58.0,27.1 60.5,115.3 63.0,97.2 65.5,43.3 68.0,71.5 70.7,64.6 73.2,84.7 75.7,88.6 78.3,49.3 80.8,54.9 83.3,90.7 85.8,26.7 88.5,35.4 91.0,61.1 93.5,76.4 96.0,35.4 98.5,29.9 101.0,52.8 103.6,65.3 106.1,90.3 108.6,115.3 111.1,109.7 113.6,29.9 116.1,90.3 118.6,120.8 121.2,121.5 123.7,122.9 126.2,79.4 128.7,79.2 131.2,90.7 133.7,84.7 136.2,75.0 138.9,35.0 141.4,85.4 143.9,21.5 146.4,45.1 149.0,37.5 149.0,124" fill="rgba(28,113,216,.395)"/><polyline points="0.0,39.6 2.5,35.4 5.0,65.3 7.5,118.7 10.0,120.1 12.5,45.8 15.3,41.0 17.5,20.1 20.3,75.7 22.6,55.3 25.1,72.2 27.8,65.0 30.3,70.8 32.8,63.2 35.4,9.7 37.9,77.1 40.4,96.5 42.9,117.3 45.4,99.3 47.9,27.1 50.4,112.2 53.0,29.2 55.5,59.4 58.0,27.1 60.5,115.3 63.0,97.2 65.5,43.3 68.0,71.5 70.7,64.6 73.2,84.7 75.7,88.6 78.3,49.3 80.8,54.9 83.3,90.7 85.8,26.7 88.5,35.4 91.0,61.1 93.5,76.4 96.0,35.4 98.5,29.9 101.0,52.8 103.6,65.3 106.1,90.3 108.6,115.3 111.1,109.7 113.6,29.9 116.1,90.3 118.6,120.8 121.2,121.5 123.7,122.9 126.2,79.4 128.7,79.2 131.2,90.7 133.7,84.7 136.2,75.0 138.9,35.0 141.4,85.4 143.9,21.5 146.4,45.1 149.0,37.5" fill="none" stroke="#1c71d8" stroke-width="1.05" stroke-linejoin="round"/></g><rect x="0.5" y="0.5" width="148" height="123" rx="6" ry="6" fill="none" stroke="#1c71d8" stroke-width="1"/></svg>
<svg style="left:758px;top:244px" width="149" height="124" viewBox="0 0 149 124"><defs><clipPath id="c7"><rect x="0.5" y="0.5" width="148" height="123" rx="6" ry="6"/></clipPath></defs><g clip-path="url(#c7)"><path d="M16.50 0V124M41.33 0V124M66.17 0V124M91.00 0V124M115.83 0V124M140.67 0V124M0 12.40H149M0 24.80H149M0 37.20H149M0 49.60H149M0 62.00H149M0 74.40H149M0 86.80H149M0 99.20H149M0 111.60H149" stroke="#1c71d8" stroke-opacity=".2" stroke-width="1" fill="none"/><polygon points="0.0,124 0.0,77.8 2.5,111.1 5.0,109.7 7.5,6.2 10.0,0.7 12.5,100.7 15.3,108.6 17.8,88.9 20.3,59.7 22.6,47.2 25.1,14.3 27.8,20.8 30.5,3.1 32.8,25.7 35.4,8.1 37.9,13.2 40.4,31.2 42.9,4.9 45.4,22.9 47.9,66.7 50.4,11.4 53.0,97.6 55.5,72.9 58.0,103.5 60.5,7.6 63.0,32.6 65.5,20.8 68.0,13.2 70.7,27.1 73.2,27.4 75.7,25.7 78.3,0.7 80.8,10.4 83.3,62.5 85.8,23.6 88.5,15.0 91.0,38.9 93.5,14.3 96.0,11.1 98.5,3.9 101.0,99.3 103.6,117.8 106.1,90.3 108.6,20.8 111.1,26.4 113.6,115.7 116.1,48.6 118.6,0.7 121.2,0.7 123.7,0.7 126.2,82.3 128.7,45.8 131.2,20.8 133.7,17.4 136.2,6.9 138.9,11.8 141.4,15.0 143.9,5.6 146.4,16.7 149.0,8.3 149.0,124" fill="rgba(28,113,216,.395)"/><polyline points="0.0,77.8 2.5,111.1 5.0,109.7 7.5,6.2 10.0,0.7 12.5,100.7 15.3,108.6 17.8,88.9 20.3,59.7 22.6,47.2 25.1,14.3 27.8,20.8 30.5,3.1 32.8,25.7 35.4,8.1 37.9,13.2 40.4,31.2 42.9,4.9 45.4,22.9 47.9,66.7 50.4,11.4 53.0,97.6 55.5,72.9 58.0,103.5 60.5,7.6 63.0,32.6 65.5,20.8 68.0,13.2 70.7,27.1 73.2,27.4 75.7,25.7 78.3,0.7 80.8,10.4 83.3,62.5 85.8,23.6 88.5,15.0 91.0,38.9 93.5,14.3 96.0,11.1 98.5,3.9 101.0,99.3 103.6,117.8 106.1,90.3 108.6,20.8 111.1,26.4 113.6,115.7 116.1,48.6 118.6,0.7 121.2,0.7 123.7,0.7 126.2,82.3 128.7,45.8 131.2,20.8 133.7,17.4 136.2,6.9 138.9,11.8 141.4,15.0 143.9,5.6 146.4,16.7 149.0,8.3" fill="none" stroke="#1c71d8" stroke-width="1.05" stroke-linejoin="round"/></g><rect x="0.5" y="0.5" width="148" height="123" rx="6" ry="6" fill="none" stroke="#1c71d8" stroke-width="1"/></svg>
<svg style="left:290px;top:375px" width="149" height="124" viewBox="0 0 149 124"><defs><clipPath id="c8"><rect x="0.5" y="0.5" width="148" height="123" rx="6" ry="6"/></clipPath></defs><g clip-path="url(#c8)"><path d="M16.50 0V124M41.33 0V124M66.17 0V124M91.00 0V124M115.83 0V124M140.67 0V124M0 12.40H149M0 24.80H149M0 37.20H149M0 49.60H149M0 62.00H149M0 74.40H149M0 86.80H149M0 99.20H149M0 111.60H149" stroke="#1c71d8" stroke-opacity=".2" stroke-width="1" fill="none"/><polygon points="0.0,124 0.0,88.9 2.5,91.6 5.0,63.5 7.5,90.5 10.0,85.8 12.5,101.4 15.3,74.3 17.8,70.5 20.3,75.7 22.6,84.7 25.1,91.9 27.8,77.8 30.3,58.3 32.8,60.7 35.4,13.2 37.9,75.0 40.4,100.4 42.9,58.3 45.4,92.8 47.9,56.2 50.4,104.8 53.0,60.8 55.5,97.2 58.0,101.4 60.5,99.3 63.0,105.5 65.5,47.6 68.0,76.1 70.7,76.0 73.2,70.8 75.7,81.9 78.3,50.7 80.8,56.5 83.3,99.3 85.8,33.3 88.5,21.2 91.0,70.8 93.5,86.4 96.0,40.3 98.5,29.9 101.0,76.4 103.6,90.0 106.1,89.6 108.6,108.3 111.1,108.3 113.6,86.8 116.1,93.0 118.6,82.9 121.2,89.8 123.7,109.4 126.2,105.5 128.7,91.6 131.2,84.4 133.7,77.1 136.2,78.0 138.9,27.1 141.4,78.5 143.9,31.9 146.4,59.0 149.0,43.7 149.0,124" fill="rgba(28,113,216,.395)"/><polyline points="0.0,88.9 2.5,91.6 5.0,63.5 7.5,90.5 10.0,85.8 12.5,101.4 15.3,74.3 17.8,70.5 20.3,75.7 22.6,84.7 25.1,91.9 27.8,77.8 30.3,58.3 32.8,60.7 35.4,13.2 37.9,75.0 40.4,100.4 42.9,58.3 45.4,92.8 47.9,56.2 50.4,104.8 53.0,60.8 55.5,97.2 58.0,101.4 60.5,99.3 63.0,105.5 65.5,47.6 68.0,76.1 70.7,76.0 73.2,70.8 75.7,81.9 78.3,50.7 80.8,56.5 83.3,99.3 85.8,33.3 88.5,21.2 91.0,70.8 93.5,86.4 96.0,40.3 98.5,29.9 101.0,76.4 103.6,90.0 106.1,89.6 108.6,108.3 111.1,108.3 113.6,86.8 116.1,93.0 118.6,82.9 121.2,89.8 123.7,109.4 126.2,105.5 128.7,91.6 131.2,84.4 133.7,77.1 136.2,78.0 138.9,27.1 141.4,78.5 143.9,31.9 146.4,59.0 149.0,43.7" fill="none" stroke="#1c71d8" stroke-width="1.05" stroke-linejoin="round"/></g><rect x="0.5" y="0.5" width="148" height="123" rx="6" ry="6" fill="none" stroke="#1c71d8" stroke-width="1"/></svg>
<svg style="left:446px;top:375px" width="149" height="124" viewBox="0 0 149 124"><defs><clipPath id="c9"><rect x="0.5" y="0.5" width="148" height="123" rx="6" ry="6"/></clipPath></defs><g clip-path="url(#c9)"><path d="M16.50 0V124M41.33 0V124M66.17 0V124M91.00 0V124M115.83 0V124M140.67 0V124M0 12.40H149M0 24.80H149M0 37.20H149M0 49.60H149M0 62.00H149M0 74.40H149M0 86.80H149M0 99.20H149M0 111.60H149" stroke="#1c71d8" stroke-opacity=".2" stroke-width="1" fill="none"/><polygon points="0.0,124 0.0,16.7 2.5,69.4 5.0,114.6 7.5,106.9 10.0,80.5 12.5,30.3 15.3,91.0 17.8,82.2 20.3,84.7 22.6,6.2 25.1,0.7 27.8,17.4 30.3,14.3 32.8,38.6 35.4,1.1 37.9,4.2 40.4,32.6 42.9,84.7 45.4,35.7 47.9,49.3 50.4,39.6 53.0,86.8 55.5,46.5 58.0,44.9 60.5,37.5 63.0,16.7 65.5,11.1 68.0,8.6 70.7,18.1 73.2,53.5 75.7,69.7 78.3,0.7 80.8,13.9 83.3,22.2 85.8,3.1 88.5,6.9 91.0,19.4 93.5,5.3 96.0,4.9 98.5,2.5 101.0,99.3 103.6,106.2 106.1,89.6 108.6,106.2 111.1,102.5 113.6,108.3 116.1,109.0 118.6,118.7 121.2,109.7 123.7,93.0 126.2,79.8 128.7,18.7 131.2,26.4 133.7,21.5 136.2,1.7 138.9,19.4 141.4,31.2 143.9,10.4 146.4,4.9 149.0,1.4 149.0,124" fill="rgba(28,113,216,.395)"/><polyline points="0.0,16.7 2.5,69.4 5.0,114.6 7.5,106.9 10.0,80.5 12.5,30.3 15.3,91.0 17.8,82.2 20.3,84.7 22.6,6.2 25.1,0.7 27.8,17.4 30.3,14.3 32.8,38.6 35.4,1.1 37.9,4.2 40.4,32.6 42.9,84.7 45.4,35.7 47.9,49.3 50.4,39.6 53.0,86.8 55.5,46.5 58.0,44.9 60.5,37.5 63.0,16.7 65.5,11.1 68.0,8.6 70.7,18.1 73.2,53.5 75.7,69.7 78.3,0.7 80.8,13.9 83.3,22.2 85.8,3.1 88.5,6.9 91.0,19.4 93.5,5.3 96.0,4.9 98.5,2.5 101.0,99.3 103.6,106.2 106.1,89.6 108.6,106.2 111.1,102.5 113.6,108.3 116.1,109.0 118.6,118.7 121.2,109.7 123.7,93.0 126.2,79.8 128.7,18.7 131.2,26.4 133.7,21.5 136.2,1.7 138.9,19.4 141.4,31.2 143.9,10.4 146.4,4.9 149.0,1.4" fill="none" stroke="#1c71d8" stroke-width="1.05" stroke-linejoin="round"/></g><rect x="0.5" y="0.5" width="148" height="123" rx="6" ry="6" fill="none" stroke="#1c71d8" stroke-width="1"/></svg>
<svg style="left:602px;top:375px" width="149" height="124" viewBox="0 0 149 124"><defs><clipPath id="c10"><rect x="0.5" y="0.5" width="148" height="123" rx="6" ry="6"/></clipPath></defs><g clip-path="url(#c10)"><path d="M16.50 0V124M41.33 0V124M66.17 0V124M91.00 0V124M115.83 0V124M140.67 0V124M0 12.40H149M0 24.80H149M0 37.20H149M0 49.60H149M0 62.00H149M0 74.40H149M0 86.80H149M0 99.20H149M0 111.60H149" stroke="#1c71d8" stroke-opacity=".2" stroke-width="1" fill="none"/><polygon points="0.0,124 0.0,48.6 2.5,54.2 5.0,88.6 7.5,57.2 10.0,102.5 12.5,72.2 15.3,75.7 17.8,66.4 20.3,90.3 22.6,55.3 25.1,67.3 27.8,76.4 30.3,52.8 32.8,89.6 35.4,14.6 37.9,47.2 40.4,99.3 42.9,51.8 45.4,56.9 47.9,80.5 50.4,117.3 53.0,72.5 55.5,77.8 58.0,71.5 60.5,68.5 63.0,75.0 65.5,62.8 68.0,74.6 70.7,55.5 73.2,54.2 75.7,73.6 78.3,23.6 80.8,56.2 83.3,85.1 85.8,20.8 88.5,43.0 91.0,81.2 93.5,59.7 96.0,37.5 98.5,12.8 101.0,84.7 103.6,87.9 106.1,121.1 108.6,11.5 111.1,8.6 113.6,90.3 116.1,89.3 118.6,78.5 121.2,88.5 123.7,29.4 126.2,65.3 128.7,66.4 131.2,87.5 133.7,75.7 136.2,52.1 138.9,36.1 141.4,57.4 143.9,15.6 146.4,36.8 149.0,19.4 149.0,124" fill="rgba(28,113,216,.395)"/><polyline points="0.0,48.6 2.5,54.2 5.0,88.6 7.5,57.2 10.0,102.5 12.5,72.2 15.3,75.7 17.8,66.4 20.3,90.3 22.6,55.3 25.1,67.3 27.8,76.4 30.3,52.8 32.8,89.6 35.4,14.6 37.9,47.2 40.4,99.3 42.9,51.8 45.4,56.9 47.9,80.5 50.4,117.3 53.0,72.5 55.5,77.8 58.0,71.5 60.5,68.5 63.0,75.0 65.5,62.8 68.0,74.6 70.7,55.5 73.2,54.2 75.7,73.6 78.3,23.6 80.8,56.2 83.3,85.1 85.8,20.8 88.5,43.0 91.0,81.2 93.5,59.7 96.0,37.5 98.5,12.8 101.0,84.7 103.6,87.9 106.1,121.1 108.6,11.5 111.1,8.6 113.6,90.3 116.1,89.3 118.6,78.5 121.2,88.5 123.7,29.4 126.2,65.3 128.7,66.4 131.2,87.5 133.7,75.7 136.2,52.1 138.9,36.1 141.4,57.4 143.9,15.6 146.4,36.8 149.0,19.4" fill="none" stroke="#1c71d8" stroke-width="1.05" stroke-linejoin="round"/></g><rect x="0.5" y="0.5" width="148" height="123" rx="6" ry="6" fill="none" stroke="#1c71d8" stroke-width="1"/></svg>
<svg style="left:758px;top:375px" width="149" height="124" viewBox="0 0 149 124"><defs><clipPath id="c11"><rect x="0.5" y="0.5" width="148" height="123" rx="6" ry="6"/></clipPath></defs><g clip-path="url(#c11)"><path d="M16.50 0V124M41.33 0V124M66.17 0V124M91.00 0V124M115.83 0V124M140.67 0V124M0 12.40H149M0 24.80H149M0 37.20H149M0 49.60H149M0 62.00H149M0 74.40H149M0 86.80H149M0 99.20H149M0 111.60H149" stroke="#1c71d8" stroke-opacity=".2" stroke-width="1" fill="none"/><polygon points="0.0,124 0.0,75.0 2.5,100.0 5.0,97.9 7.5,106.9 10.0,32.2 12.5,99.3 15.3,100.0 17.8,91.9 20.3,102.5 22.6,75.7 25.1,34.7 27.8,18.7 30.3,18.1 32.8,1.4 35.4,4.9 37.9,48.6 40.4,37.5 42.9,97.2 45.4,94.1 47.9,2.1 50.4,1.1 53.0,58.3 55.5,77.8 58.0,75.0 60.5,58.3 63.0,91.6 65.5,1.1 68.0,13.2 70.7,21.5 73.2,75.7 75.7,68.0 78.3,36.8 80.8,26.4 83.3,38.9 85.8,16.7 88.5,9.0 91.0,12.8 93.5,33.3 96.0,1.4 98.5,20.1 101.0,86.8 103.6,109.7 106.1,4.2 108.6,111.8 111.1,122.2 113.6,89.6 116.1,116.0 118.6,114.6 121.2,103.9 123.7,113.2 126.2,97.2 128.7,50.0 131.2,18.7 133.7,16.4 136.2,47.2 138.9,15.7 141.4,57.4 143.9,25.7 146.4,31.2 149.0,25.7 149.0,124" fill="rgba(28,113,216,.395)"/><polyline points="0.0,75.0 2.5,100.0 5.0,97.9 7.5,106.9 10.0,32.2 12.5,99.3 15.3,100.0 17.8,91.9 20.3,102.5 22.6,75.7 25.1,34.7 27.8,18.7 30.3,18.1 32.8,1.4 35.4,4.9 37.9,48.6 40.4,37.5 42.9,97.2 45.4,94.1 47.9,2.1 50.4,1.1 53.0,58.3 55.5,77.8 58.0,75.0 60.5,58.3 63.0,91.6 65.5,1.1 68.0,13.2 70.7,21.5 73.2,75.7 75.7,68.0 78.3,36.8 80.8,26.4 83.3,38.9 85.8,16.7 88.5,9.0 91.0,12.8 93.5,33.3 96.0,1.4 98.5,20.1 101.0,86.8 103.6,109.7 106.1,4.2 108.6,111.8 111.1,122.2 113.6,89.6 116.1,116.0 118.6,114.6 121.2,103.9 123.7,113.2 126.2,97.2 128.7,50.0 131.2,18.7 133.7,16.4 136.2,47.2 138.9,15.7 141.4,57.4 143.9,25.7 146.4,31.2 149.0,25.7" fill="none" stroke="#1c71d8" stroke-width="1.05" stroke-linejoin="round"/></g><rect x="0.5" y="0.5" width="148" height="123" rx="6" ry="6" fill="none" stroke="#1c71d8" stroke-width="1"/></svg>
<svg style="left:290px;top:506px" width="149" height="124" viewBox="0 0 149 124"><defs><clipPath id="c12"><rect x="0.5" y="0.5" width="148" height="123" rx="6" ry="6"/></clipPath></defs><g clip-path="url(#c12)"><path d="M16.50 0V124M41.33 0V124M66.17 0V124M91.00 0V124M115.83 0V124M140.67 0V124M0 12.40H149M0 24.80H149M0 37.20H149M0 49.60H149M0 62.00H149M0 74.40H149M0 86.80H149M0 99.20H149M0 111.60H149" stroke="#1c71d8" stroke-opacity=".2" stroke-width="1" fill="none"/><polygon points="0.0,124 0.0,54.2 2.5,80.5 5.0,94.4 7.5,100.0 10.0,91.0 12.5,85.1 15.3,91.6 17.8,75.4 20.3,91.0 22.6,61.1 25.1,39.3 27.8,47.2 30.3,37.8 32.8,52.8 35.4,16.0 37.9,59.7 40.4,91.4 42.9,91.6 45.4,77.8 47.9,56.9 50.4,84.0 53.0,88.2 55.5,77.5 58.0,86.8 60.5,80.5 63.0,79.4 65.5,30.8 68.0,46.9 70.7,46.8 73.2,68.7 75.7,81.2 78.3,29.4 80.8,44.4 83.3,78.7 85.8,18.1 88.5,12.5 91.0,45.1 93.5,51.4 96.0,27.8 98.5,16.4 101.0,87.2 103.6,96.5 106.1,91.6 108.6,103.5 111.1,100.7 113.6,98.6 116.1,94.7 118.6,94.4 121.2,94.7 123.7,100.3 126.2,91.6 128.7,64.6 131.2,54.9 133.7,43.7 136.2,41.0 138.9,23.3 141.4,53.5 143.9,20.8 146.4,38.9 149.0,23.6 149.0,124" fill="rgba(28,113,216,.395)"/><polyline points="0.0,54.2 2.5,80.5 5.0,94.4 7.5,100.0 10.0,91.0 12.5,85.1 15.3,91.6 17.8,75.4 20.3,91.0 22.6,61.1 25.1,39.3 27.8,47.2 30.3,37.8 32.8,52.8 35.4,16.0 37.9,59.7 40.4,91.4 42.9,91.6 45.4,77.8 47.9,56.9 50.4,84.0 53.0,88.2 55.5,77.5 58.0,86.8 60.5,80.5 63.0,79.4 65.5,30.8 68.0,46.9 70.7,46.8 73.2,68.7 75.7,81.2 78.3,29.4 80.8,44.4 83.3,78.7 85.8,18.1 88.5,12.5 91.0,45.1 93.5,51.4 96.0,27.8 98.5,16.4 101.0,87.2 103.6,96.5 106.1,91.6 108.6,103.5 111.1,100.7 113.6,98.6 116.1,94.7 118.6,94.4 121.2,94.7 123.7,100.3 126.2,91.6 128.7,64.6 131.2,54.9 133.7,43.7 136.2,41.0 138.9,23.3 141.4,53.5 143.9,20.8 146.4,38.9 149.0,23.6" fill="none" stroke="#1c71d8" stroke-width="1.05" stroke-linejoin="round"/></g><rect x="0.5" y="0.5" width="148" height="123" rx="6" ry="6" fill="none" stroke="#1c71d8" stroke-width="1"/></svg>
<svg style="left:446px;top:506px" width="149" height="124" viewBox="0 0 149 124"><defs><clipPath id="c13"><rect x="0.5" y="0.5" width="148" height="123" rx="6" ry="6"/></clipPath></defs><g clip-path="url(#c13)"><path d="M16.50 0V124M41.33 0V124M66.17 0V124M91.00 0V124M115.83 0V124M140.67 0V124M0 12.40H149M0 24.80H149M0 37.20H149M0 49.60H149M0 62.00H149M0 74.40H149M0 86.80H149M0 99.20H149M0 111.60H149" stroke="#1c71d8" stroke-opacity=".2" stroke-width="1" fill="none"/><polygon points="0.0,124 0.0,51.4 2.5,80.5 5.0,91.6 7.5,101.1 10.0,87.9 12.5,83.3 15.3,88.5 17.8,76.4 20.3,96.5 22.6,63.9 25.1,42.4 27.8,47.9 30.3,34.7 32.8,55.3 35.4,14.6 37.9,59.7 40.4,91.4 42.9,91.6 45.4,82.6 47.9,54.4 50.4,81.2 53.0,90.0 55.5,81.0 58.0,91.6 60.5,84.0 63.0,84.0 65.5,28.7 68.0,26.4 70.7,55.5 73.2,77.1 75.7,77.1 78.3,30.5 80.8,45.8 83.3,87.9 85.8,18.1 88.5,14.3 91.0,44.4 93.5,45.8 96.0,22.2 98.5,18.5 101.0,92.3 103.6,97.2 106.1,99.3 108.6,101.6 111.1,99.3 113.6,101.1 116.1,99.3 118.6,93.7 121.2,96.5 123.7,103.0 126.2,94.4 128.7,69.4 131.2,52.8 133.7,43.3 136.2,45.8 138.9,28.7 141.4,54.6 143.9,18.1 146.4,34.7 149.0,20.8 149.0,124" fill="rgba(28,113,216,.395)"/><polyline points="0.0,51.4 2.5,80.5 5.0,91.6 7.5,101.1 10.0,87.9 12.5,83.3 15.3,88.5 17.8,76.4 20.3,96.5 22.6,63.9 25.1,42.4 27.8,47.9 30.3,34.7 32.8,55.3 35.4,14.6 37.9,59.7 40.4,91.4 42.9,91.6 45.4,82.6 47.9,54.4 50.4,81.2 53.0,90.0 55.5,81.0 58.0,91.6 60.5,84.0 63.0,84.0 65.5,28.7 68.0,26.4 70.7,55.5 73.2,77.1 75.7,77.1 78.3,30.5 80.8,45.8 83.3,87.9 85.8,18.1 88.5,14.3 91.0,44.4 93.5,45.8 96.0,22.2 98.5,18.5 101.0,92.3 103.6,97.2 106.1,99.3 108.6,101.6 111.1,99.3 113.6,101.1 116.1,99.3 118.6,93.7 121.2,96.5 123.7,103.0 126.2,94.4 128.7,69.4 131.2,52.8 133.7,43.3 136.2,45.8 138.9,28.7 141.4,54.6 143.9,18.1 146.4,34.7 149.0,20.8" fill="none" stroke="#1c71d8" stroke-width="1.05" stroke-linejoin="round"/></g><rect x="0.5" y="0.5" width="148" height="123" rx="6" ry="6" fill="none" stroke="#1c71d8" stroke-width="1"/></svg>
<svg style="left:602px;top:506px" width="149" height="124" viewBox="0 0 149 124"><defs><clipPath id="c14"><rect x="0.5" y="0.5" width="148" height="123" rx="6" ry="6"/></clipPath></defs><g clip-path="url(#c14)"><path d="M16.50 0V124M41.33 0V124M66.17 0V124M91.00 0V124M115.83 0V124M140.67 0V124M0 12.40H149M0 24.80H149M0 37.20H149M0 49.60H149M0 62.00H149M0 74.40H149M0 86.80H149M0 99.20H149M0 111.60H149" stroke="#1c71d8" stroke-opacity=".2" stroke-width="1" fill="none"/><polygon points="0.0,124 0.0,52.8 2.5,84.7 5.0,95.1 7.5,100.7 10.0,86.8 12.5,78.7 15.3,89.6 17.8,80.5 20.3,99.3 22.6,61.1 25.1,35.8 27.8,41.2 30.3,26.4 32.8,41.4 35.4,7.4 37.9,50.0 40.4,96.8 42.9,94.8 45.4,84.0 47.9,60.1 50.4,91.2 53.0,92.3 55.5,75.7 58.0,87.5 60.5,78.7 63.0,79.8 65.5,23.3 68.0,32.6 70.7,34.7 73.2,58.3 75.7,80.5 78.3,23.9 80.8,45.8 83.3,80.5 85.8,18.1 88.5,15.3 91.0,40.5 93.5,42.4 96.0,23.6 98.5,13.5 101.0,89.6 103.6,97.2 106.1,99.3 108.6,105.5 111.1,104.1 113.6,95.5 116.1,97.2 118.6,93.3 121.2,96.9 123.7,104.1 126.2,91.6 128.7,59.0 131.2,50.7 133.7,28.2 136.2,40.3 138.9,25.0 141.4,56.2 143.9,16.0 146.4,40.3 149.0,18.1 149.0,124" fill="rgba(28,113,216,.395)"/><polyline points="0.0,52.8 2.5,84.7 5.0,95.1 7.5,100.7 10.0,86.8 12.5,78.7 15.3,89.6 17.8,80.5 20.3,99.3 22.6,61.1 25.1,35.8 27.8,41.2 30.3,26.4 32.8,41.4 35.4,7.4 37.9,50.0 40.4,96.8 42.9,94.8 45.4,84.0 47.9,60.1 50.4,91.2 53.0,92.3 55.5,75.7 58.0,87.5 60.5,78.7 63.0,79.8 65.5,23.3 68.0,32.6 70.7,34.7 73.2,58.3 75.7,80.5 78.3,23.9 80.8,45.8 83.3,80.5 85.8,18.1 88.5,15.3 91.0,40.5 93.5,42.4 96.0,23.6 98.5,13.5 101.0,89.6 103.6,97.2 106.1,99.3 108.6,105.5 111.1,104.1 113.6,95.5 116.1,97.2 118.6,93.3 121.2,96.9 123.7,104.1 126.2,91.6 128.7,59.0 131.2,50.7 133.7,28.2 136.2,40.3 138.9,25.0 141.4,56.2 143.9,16.0 146.4,40.3 149.0,18.1" fill="none" stroke="#1c71d8" stroke-width="1.05" stroke-linejoin="round"/></g><rect x="0.5" y="0.5" width="148" height="123" rx="6" ry="6" fill="none" stroke="#1c71d8" stroke-width="1"/></svg>
<svg style="left:758px;top:506px" width="149" height="124" viewBox="0 0 149 124"><defs><clipPath id="c15"><rect x="0.5" y="0.5" width="148" height="123" rx="6" ry="6"/></clipPath></defs><g clip-path="url(#c15)"><path d="M16.50 0V124M41.33 0V124M66.17 0V124M91.00 0V124M115.83 0V124M140.67 0V124M0 12.40H149M0 24.80H149M0 37.20H149M0 49.60H149M0 62.00H149M0 74.40H149M0 86.80H149M0 99.20H149M0 111.60H149" stroke="#1c71d8" stroke-opacity=".2" stroke-width="1" fill="none"/><polygon points="0.0,124 0.0,45.8 2.5,79.2 5.0,95.1 7.5,99.3 10.0,83.6 12.5,79.4 15.3,94.4 17.8,73.2 20.3,100.0 22.6,45.8 25.1,22.2 27.8,12.5 30.3,9.7 32.8,20.8 35.4,2.5 37.9,33.3 40.4,81.9 42.9,91.6 45.4,80.5 47.9,47.9 50.4,79.8 53.0,84.3 55.5,72.2 58.0,85.0 60.5,72.9 63.0,76.8 65.5,6.5 68.0,13.9 70.7,21.5 73.2,54.2 75.7,68.7 78.3,7.4 80.8,29.2 83.3,67.3 85.8,8.1 88.5,1.1 91.0,11.1 93.5,29.4 96.0,8.6 98.5,8.3 101.0,82.6 103.6,98.9 106.1,91.6 108.6,100.0 111.1,104.8 113.6,93.7 116.1,92.3 118.6,98.3 121.2,98.9 123.7,105.5 126.2,91.6 128.7,45.8 131.2,33.3 133.7,26.4 136.2,25.0 138.9,16.4 141.4,43.5 143.9,2.1 146.4,13.2 149.0,4.9 149.0,124" fill="rgba(28,113,216,.395)"/><polyline points="0.0,45.8 2.5,79.2 5.0,95.1 7.5,99.3 10.0,83.6 12.5,79.4 15.3,94.4 17.8,73.2 20.3,100.0 22.6,45.8 25.1,22.2 27.8,12.5 30.3,9.7 32.8,20.8 35.4,2.5 37.9,33.3 40.4,81.9 42.9,91.6 45.4,80.5 47.9,47.9 50.4,79.8 53.0,84.3 55.5,72.2 58.0,85.0 60.5,72.9 63.0,76.8 65.5,6.5 68.0,13.9 70.7,21.5 73.2,54.2 75.7,68.7 78.3,7.4 80.8,29.2 83.3,67.3 85.8,8.1 88.5,1.1 91.0,11.1 93.5,29.4 96.0,8.6 98.5,8.3 101.0,82.6 103.6,98.9 106.1,91.6 108.6,100.0 111.1,104.8 113.6,93.7 116.1,92.3 118.6,98.3 121.2,98.9 123.7,105.5 126.2,91.6 128.7,45.8 131.2,33.3 133.7,26.4 136.2,25.0 138.9,16.4 141.4,43.5 143.9,2.1 146.4,13.2 149.0,4.9" fill="none" stroke="#1c71d8" stroke-width="1.05" stroke-linejoin="round"/></g><rect x="0.5" y="0.5" width="148" height="123" rx="6" ry="6" fill="none" stroke="#1c71d8" stroke-width="1"/></svg>
<svg style="left:290px;top:637px" width="149" height="124" viewBox="0 0 149 124"><defs><clipPath id="c16"><rect x="0.5" y="0.5" width="148" height="123" rx="6" ry="6"/></clipPath></defs><g clip-path="url(#c16)"><path d="M16.50 0V124M41.33 0V124M66.17 0V124M91.00 0V124M115.83 0V124M140.67 0V124M0 12.40H149M0 24.80H149M0 37.20H149M0 49.60H149M0 62.00H149M0 74.40H149M0 86.80H149M0 99.20H149M0 111.60H149" stroke="#1c71d8" stroke-opacity=".2" stroke-width="1" fill="none"/><polygon points="0.0,124 0.0,27.8 2.5,69.4 5.0,88.2 7.5,100.0 10.0,73.6 12.5,74.3 15.3,92.8 17.8,76.4 20.3,92.3 22.6,56.9 25.1,23.6 27.8,16.7 30.3,22.2 32.8,23.6 35.4,2.5 37.9,41.7 40.4,86.8 42.9,81.0 45.4,74.6 47.9,59.7 50.4,81.9 53.0,84.0 55.5,74.3 58.0,84.7 60.5,81.7 63.0,84.7 65.5,20.4 68.0,29.9 70.7,33.3 73.2,55.5 75.7,74.3 78.3,22.2 80.8,29.9 83.3,73.6 85.8,15.3 88.5,2.5 91.0,22.2 93.5,16.0 96.0,6.2 98.5,18.7 101.0,83.3 103.6,103.5 106.1,89.6 108.6,103.5 111.1,102.8 113.6,96.5 116.1,93.7 118.6,98.6 121.2,90.0 123.7,101.1 126.2,91.6 128.7,59.7 131.2,47.2 133.7,16.4 136.2,41.2 138.9,18.7 141.4,48.6 143.9,4.2 146.4,21.5 149.0,11.1 149.0,124" fill="rgba(28,113,216,.395)"/><polyline points="0.0,27.8 2.5,69.4 5.0,88.2 7.5,100.0 10.0,73.6 12.5,74.3 15.3,92.8 17.8,76.4 20.3,92.3 22.6,56.9 25.1,23.6 27.8,16.7 30.3,22.2 32.8,23.6 35.4,2.5 37.9,41.7 40.4,86.8 42.9,81.0 45.4,74.6 47.9,59.7 50.4,81.9 53.0,84.0 55.5,74.3 58.0,84.7 60.5,81.7 63.0,84.7 65.5,20.4 68.0,29.9 70.7,33.3 73.2,55.5 75.7,74.3 78.3,22.2 80.8,29.9 83.3,73.6 85.8,15.3 88.5,2.5 91.0,22.2 93.5,16.0 96.0,6.2 98.5,18.7 101.0,83.3 103.6,103.5 106.1,89.6 108.6,103.5 111.1,102.8 113.6,96.5 116.1,93.7 118.6,98.6 121.2,90.0 123.7,101.1 126.2,91.6 128.7,59.7 131.2,47.2 133.7,16.4 136.2,41.2 138.9,18.7 141.4,48.6 143.9,4.2 146.4,21.5 149.0,11.1" fill="none" stroke="#1c71d8" stroke-width="1.05" stroke-linejoin="round"/></g><rect x="0.5" y="0.5" width="148" height="123" rx="6" ry="6" fill="none" stroke="#1c71d8" stroke-width="1"/></svg>
<svg style="left:446px;top:637px" width="149" height="124" viewBox="0 0 149 124"><defs><clipPath id="c17"><rect x="0.5" y="0.5" width="148" height="123" rx="6" ry="6"/></clipPath></defs><g clip-path="url(#c17)"><path d="M16.50 0V124M41.33 0V124M66.17 0V124M91.00 0V124M115.83 0V124M140.67 0V124M0 12.40H149M0 24.80H149M0 37.20H149M0 49.60H149M0 62.00H149M0 74.40H149M0 86.80H149M0 99.20H149M0 111.60H149" stroke="#1c71d8" stroke-opacity=".2" stroke-width="1" fill="none"/><polygon points="0.0,124 0.0,27.8 2.5,65.3 5.0,81.9 7.5,96.1 10.0,79.8 12.5,70.1 15.3,82.6 17.8,72.2 20.3,84.0 22.6,43.0 25.1,4.9 27.8,5.1 30.3,7.2 32.8,5.6 35.4,1.1 37.9,15.3 40.4,81.9 42.9,69.4 45.4,63.2 47.9,40.5 50.4,68.0 53.0,74.3 55.5,71.9 58.0,69.2 60.5,58.3 63.0,75.7 65.5,12.5 68.0,12.2 70.7,8.6 73.2,48.6 75.7,69.4 78.3,11.8 80.8,12.9 83.3,42.4 85.8,6.9 88.5,3.5 91.0,11.1 93.5,17.4 96.0,2.8 98.5,9.7 101.0,75.0 103.6,95.1 106.1,91.0 108.6,96.5 111.1,103.9 113.6,93.3 116.1,94.1 118.6,91.0 121.2,86.8 123.7,93.7 126.2,84.0 128.7,47.2 131.2,31.2 133.7,13.5 136.2,14.3 138.9,10.8 141.4,35.4 144.4,1.1 146.4,4.2 149.0,7.6 149.0,124" fill="rgba(28,113,216,.395)"/><polyline points="0.0,27.8 2.5,65.3 5.0,81.9 7.5,96.1 10.0,79.8 12.5,70.1 15.3,82.6 17.8,72.2 20.3,84.0 22.6,43.0 25.1,4.9 27.8,5.1 30.3,7.2 32.8,5.6 35.4,1.1 37.9,15.3 40.4,81.9 42.9,69.4 45.4,63.2 47.9,40.5 50.4,68.0 53.0,74.3 55.5,71.9 58.0,69.2 60.5,58.3 63.0,75.7 65.5,12.5 68.0,12.2 70.7,8.6 73.2,48.6 75.7,69.4 78.3,11.8 80.8,12.9 83.3,42.4 85.8,6.9 88.5,3.5 91.0,11.1 93.5,17.4 96.0,2.8 98.5,9.7 101.0,75.0 103.6,95.1 106.1,91.0 108.6,96.5 111.1,103.9 113.6,93.3 116.1,94.1 118.6,91.0 121.2,86.8 123.7,93.7 126.2,84.0 128.7,47.2 131.2,31.2 133.7,13.5 136.2,14.3 138.9,10.8 141.4,35.4 144.4,1.1 146.4,4.2 149.0,7.6" fill="none" stroke="#1c71d8" stroke-width="1.05" stroke-linejoin="round"/></g><rect x="0.5" y="0.5" width="148" height="123" rx="6" ry="6" fill="none" stroke="#1c71d8" stroke-width="1"/></svg>
<svg style="left:602px;top:637px" width="149" height="124" viewBox="0 0 149 124"><defs><clipPath id="c18"><rect x="0.5" y="0.5" width="148" height="123" rx="6" ry="6"/></clipPath></defs><g clip-path="url(#c18)"><path d="M16.50 0V124M41.33 0V124M66.17 0V124M91.00 0V124M115.83 0V124M140.67 0V124M0 12.40H149M0 24.80H149M0 37.20H149M0 49.60H149M0 62.00H149M0 74.40H149M0 86.80H149M0 99.20H149M0 111.60H149" stroke="#1c71d8" stroke-opacity=".2" stroke-width="1" fill="none"/><polygon points="0.0,124 0.0,27.8 2.5,69.8 5.0,73.6 7.5,92.3 10.0,70.8 12.5,61.5 15.3,79.8 17.8,74.3 20.3,86.8 22.6,55.5 25.1,14.3 27.8,21.9 30.3,29.4 32.8,27.1 35.4,1.1 37.9,47.2 40.4,85.4 42.9,90.3 45.4,79.8 47.9,63.2 50.4,87.8 53.0,83.3 55.5,77.1 58.0,81.9 60.5,78.2 63.0,82.9 65.5,20.6 68.0,32.6 70.7,24.7 73.2,56.2 75.7,68.0 78.3,7.4 80.8,48.6 83.3,72.2 85.8,15.3 88.5,18.1 91.0,22.9 93.5,14.6 96.0,27.1 98.5,12.9 101.0,93.7 103.6,102.1 106.1,91.4 108.6,106.9 111.1,104.1 113.6,98.3 116.1,100.0 118.6,103.5 121.2,99.3 123.7,103.5 126.2,97.2 128.7,48.6 131.2,41.0 133.7,20.8 136.2,13.5 138.9,20.8 141.4,44.4 144.4,1.4 146.4,12.5 149.0,14.6 149.0,124" fill="rgba(28,113,216,.395)"/><polyline points="0.0,27.8 2.5,69.8 5.0,73.6 7.5,92.3 10.0,70.8 12.5,61.5 15.3,79.8 17.8,74.3 20.3,86.8 22.6,55.5 25.1,14.3 27.8,21.9 30.3,29.4 32.8,27.1 35.4,1.1 37.9,47.2 40.4,85.4 42.9,90.3 45.4,79.8 47.9,63.2 50.4,87.8 53.0,83.3 55.5,77.1 58.0,81.9 60.5,78.2 63.0,82.9 65.5,20.6 68.0,32.6 70.7,24.7 73.2,56.2 75.7,68.0 78.3,7.4 80.8,48.6 83.3,72.2 85.8,15.3 88.5,18.1 91.0,22.9 93.5,14.6 96.0,27.1 98.5,12.9 101.0,93.7 103.6,102.1 106.1,91.4 108.6,106.9 111.1,104.1 113.6,98.3 116.1,100.0 118.6,103.5 121.2,99.3 123.7,103.5 126.2,97.2 128.7,48.6 131.2,41.0 133.7,20.8 136.2,13.5 138.9,20.8 141.4,44.4 144.4,1.4 146.4,12.5 149.0,14.6" fill="none" stroke="#1c71d8" stroke-width="1.05" stroke-linejoin="round"/></g><rect x="0.5" y="0.5" width="148" height="123" rx="6" ry="6" fill="none" stroke="#1c71d8" stroke-width="1"/></svg>
<svg style="left:758px;top:637px" width="149" height="124" viewBox="0 0 149 124"><defs><clipPath id="c19"><rect x="0.5" y="0.5" width="148" height="123" rx="6" ry="6"/></clipPath></defs><g clip-path="url(#c19)"><path d="M16.50 0V124M41.33 0V124M66.17 0V124M91.00 0V124M115.83 0V124M140.67 0V124M0 12.40H149M0 24.80H149M0 37.20H149M0 49.60H149M0 62.00H149M0 74.40H149M0 86.80H149M0 99.20H149M0 111.60H149" stroke="#1c71d8" stroke-opacity=".2" stroke-width="1" fill="none"/><polygon points="0.0,124 0.0,38.9 2.5,75.0 5.0,91.6 7.5,95.8 10.0,86.8 12.5,67.8 15.3,84.0 17.8,82.2 20.3,89.6 22.6,49.3 25.1,21.5 27.8,18.7 30.3,16.0 32.8,9.4 35.4,2.5 37.9,27.8 40.4,85.0 42.9,76.1 45.4,69.4 47.9,55.3 50.4,82.9 53.0,79.6 55.5,73.6 58.0,79.8 60.5,59.7 63.0,54.9 65.5,14.3 68.0,19.4 70.7,9.4 73.2,47.9 75.7,65.3 78.3,3.9 80.8,13.2 83.3,21.1 85.8,7.6 88.5,15.0 91.0,21.5 93.5,16.0 96.0,9.0 98.5,11.5 101.0,75.0 103.6,93.7 106.1,93.7 108.6,104.1 111.1,105.8 113.6,103.5 116.1,92.3 118.6,102.8 121.2,91.0 123.7,105.3 126.2,97.2 128.7,33.3 131.2,21.1 133.7,20.6 136.2,29.2 138.9,9.0 141.4,27.1 144.4,1.4 146.4,10.4 149.0,4.2 149.0,124" fill="rgba(28,113,216,.395)"/><polyline points="0.0,38.9 2.5,75.0 5.0,91.6 7.5,95.8 10.0,86.8 12.5,67.8 15.3,84.0 17.8,82.2 20.3,89.6 22.6,49.3 25.1,21.5 27.8,18.7 30.3,16.0 32.8,9.4 35.4,2.5 37.9,27.8 40.4,85.0 42.9,76.1 45.4,69.4 47.9,55.3 50.4,82.9 53.0,79.6 55.5,73.6 58.0,79.8 60.5,59.7 63.0,54.9 65.5,14.3 68.0,19.4 70.7,9.4 73.2,47.9 75.7,65.3 78.3,3.9 80.8,13.2 83.3,21.1 85.8,7.6 88.5,15.0 91.0,21.5 93.5,16.0 96.0,9.0 98.5,11.5 101.0,75.0 103.6,93.7 106.1,93.7 108.6,104.1 111.1,105.8 113.6,103.5 116.1,92.3 118.6,102.8 121.2,91.0 123.7,105.3 126.2,97.2 128.7,33.3 131.2,21.1 133.7,20.6 136.2,29.2 138.9,9.0 141.4,27.1 144.4,1.4 146.4,10.4 149.0,4.2" fill="none" stroke="#1c71d8" stroke-width="1.05" stroke-linejoin="round"/></g><rect x="0.5" y="0.5" width="148" height="123" rx="6" ry="6" fill="none" stroke="#1c71d8" stroke-width="1"/></svg>
<div class="t" style="left:921.97px;top:113.01px;font-size:12.6px;transform:scaleX(1.0162)">Utilization</div>
<div class="t" style="left:994.25px;top:113.01px;font-size:12.6px;transform:scaleX(0.9990)">Speed</div>
<div class="t" style="left:922.88px;top:130.91px;font-size:18.3px;transform:scaleX(1.0549);font-weight:700">86%</div>
<div class="t" style="left:995.05px;top:130.91px;font-size:18.3px;transform:scaleX(0.9732);font-weight:700">1.00 GHz</div>
<div class="t" style="left:921.90px;top:162.01px;font-size:12.6px;transform:scaleX(1.0002)">Processes</div>
<div class="t" style="left:998.11px;top:162.01px;font-size:12.6px;transform:scaleX(0.9774)">Threads</div>
<div class="t" style="left:1058.80px;top:162.01px;font-size:12.6px;transform:scaleX(1.0025)">Handles</div>
<div class="t" style="left:922.07px;top:179.91px;font-size:18.3px;transform:scaleX(1.0221);font-weight:700">557</div>
<div class="t" style="left:998.08px;top:179.91px;font-size:18.3px;transform:scaleX(0.9832);font-weight:700">2188</div>
<div class="t" style="left:1058.74px;top:179.91px;font-size:18.3px;transform:scaleX(1.0752);font-weight:700">22232</div>
<div class="t" style="left:921.97px;top:210.81px;font-size:12.6px;transform:scaleX(1.0092)">Up time</div>
<div class="t" style="left:922.26px;top:228.70px;font-size:18.3px;transform:scaleX(1.0655);font-weight:700">09:07:48:29</div>
<div class="t" style="left:921.90px;top:270.01px;font-size:12.6px;transform:scaleX(0.9932)">Base Speed:</div>
<div class="t" style="left:1040.39px;top:270.01px;font-size:12.6px;transform:scaleX(0.9978)">2.30 GHz</div>
<div class="t" style="left:922.05px;top:290.01px;font-size:12.6px;transform:scaleX(1.0202)">Sockets:</div>
<div class="t" style="left:1040.11px;top:290.01px;font-size:12.6px;transform:scaleX(1.0000)">1</div>
<div class="t" style="left:923.46px;top:310.01px;font-size:12.6px;transform:scaleX(1.0198)">Virtual processors:</div>
<div class="t" style="left:1039.86px;top:310.01px;font-size:12.6px;transform:scaleX(1.0513)">20</div>
<div class="t" style="left:923.47px;top:330.01px;font-size:12.6px;transform:scaleX(1.0203)">Virtualization:</div>
<div class="t" style="left:1039.51px;top:330.01px;font-size:12.6px;transform:scaleX(1.0252)">KVM / Intel VT-x</div>
<div class="t" style="left:923.10px;top:350.01px;font-size:12.6px;transform:scaleX(1.0083)">Virtual machine:</div>
<div class="t" style="left:1039.51px;top:350.01px;font-size:12.6px;transform:scaleX(1.0054)">No</div>
<div class="t" style="left:921.90px;top:370.01px;font-size:12.6px;transform:scaleX(0.9638)">L1 cache:</div>
<div class="t" style="left:1039.60px;top:370.01px;font-size:12.6px;transform:scaleX(0.9707)">1.28 MB</div>
<div class="t" style="left:921.90px;top:390.01px;font-size:12.6px;transform:scaleX(1.0238)">L2 cache:</div>
<div class="t" style="left:1039.60px;top:390.01px;font-size:12.6px;transform:scaleX(0.8837)">12.1 MB</div>
<div class="t" style="left:921.90px;top:410.01px;font-size:12.6px;transform:scaleX(1.0238)">L3 cache:</div>
<div class="t" style="left:1040.08px;top:410.01px;font-size:12.6px;transform:scaleX(0.9892)">25.2 MB</div>
<div class="t" style="left:922.68px;top:430.01px;font-size:12.6px;transform:scaleX(1.0315)">Cpufreq driver:</div>
<div class="t" style="left:1039.60px;top:430.01px;font-size:12.6px;transform:scaleX(1.0079)">intel_pstate</div>
<div class="t" style="left:922.70px;top:450.01px;font-size:12.6px;transform:scaleX(1.0316)">Cpufreq governor:</div>
<div class="t" style="left:1039.60px;top:450.01px;font-size:12.6px;transform:scaleX(1.0177)">powersave</div>
<div class="t" style="left:921.90px;top:470.01px;font-size:12.6px;transform:scaleX(1.0180)">Power preference:</div>
<div class="t" style="left:1039.60px;top:470.01px;font-size:12.6px;transform:scaleX(1.0201)">power</div>
</div></body></html>
